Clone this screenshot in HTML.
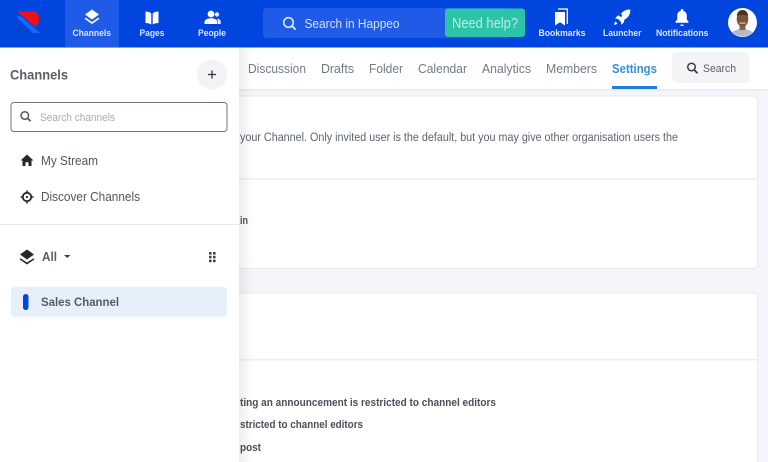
<!DOCTYPE html>
<html lang="en"><head><meta charset="utf-8"><title>Channels</title>
<style>
html,body{margin:0;padding:0;width:768px;height:462px;overflow:hidden;background:#f4f6f9}
svg{display:block}
text{font-family:"Liberation Sans",sans-serif}
</style></head><body>
<svg width="768" height="462" viewBox="0 0 768 462" xmlns="http://www.w3.org/2000/svg">
<defs>
<linearGradient id="sh" x1="0" x2="1" y1="0" y2="0"><stop offset="0" stop-color="#000" stop-opacity=".07"/><stop offset="1" stop-color="#000" stop-opacity="0"/></linearGradient>
<clipPath id="av"><circle cx="742.500" cy="22.500" r="14"/></clipPath>
</defs>
<rect width="768" height="462" fill="#f4f6f9"/>
<!-- tab bar -->
<rect x="0" y="47" width="768" height="42" fill="#fff"/>
<rect x="0" y="89" width="768" height="2" fill="#e9ecf1"/>
<g font-size="12.500" fill="#717a87">
<text x="248" y="73" textLength="58" lengthAdjust="spacingAndGlyphs">Discussion</text>
<text x="321" y="73" textLength="33" lengthAdjust="spacingAndGlyphs">Drafts</text>
<text x="369" y="73" textLength="34" lengthAdjust="spacingAndGlyphs">Folder</text>
<text x="418" y="73" textLength="49" lengthAdjust="spacingAndGlyphs">Calendar</text>
<text x="482" y="73" textLength="49" lengthAdjust="spacingAndGlyphs">Analytics</text>
<text x="546" y="73" textLength="51" lengthAdjust="spacingAndGlyphs">Members</text>
<text x="612" y="73" textLength="45" lengthAdjust="spacingAndGlyphs" font-weight="700" fill="#3a8fdd">Settings</text>
</g>
<rect x="612" y="86" width="45" height="3" fill="#1f7fd6"/>
<rect x="672" y="52" width="77" height="31" rx="4" fill="#f3f4f6"/>
<circle cx="691.500" cy="67" r="3.800" fill="none" stroke="#3b4048" stroke-width="1.500"/>
<path d="M694.300 70l3.200 3.200" stroke="#3b4048" stroke-width="1.800"/>
<text x="703" y="72" font-size="11" fill="#5a616c" textLength="33" lengthAdjust="spacingAndGlyphs">Search</text>
<!-- cards -->
<rect x="200" y="96" width="557.500" height="172.500" rx="4" fill="#fff" stroke="#e6e9ee"/>
<rect x="200" y="178" width="557" height="1.500" fill="#eceef1"/>
<text x="240" y="141" font-size="11.500" fill="#5c6370" textLength="438" lengthAdjust="spacingAndGlyphs">your Channel. Only invited user is the default, but you may give other organisation users the</text>
<text x="240" y="224" font-size="11" font-weight="700" fill="#4a5059" textLength="8" lengthAdjust="spacingAndGlyphs">in</text>
<rect x="200" y="293" width="557.500" height="180" rx="4" fill="#fff" stroke="#e6e9ee"/>
<rect x="200" y="359" width="557" height="1.500" fill="#eceef1"/>
<g font-size="11" font-weight="700" fill="#4a5059">
<text x="240" y="406" textLength="256" lengthAdjust="spacingAndGlyphs">ting an announcement is restricted to channel editors</text>
<text x="240" y="428" textLength="123" lengthAdjust="spacingAndGlyphs">stricted to channel editors</text>
<text x="240" y="451" textLength="21" lengthAdjust="spacingAndGlyphs">post</text>
</g>
<!-- sidebar -->
<rect x="239" y="47" width="14" height="415" fill="url(#sh)"/>
<rect x="0" y="47" width="239" height="415" fill="#fff"/>
<text x="10" y="79.500" font-size="14" font-weight="700" fill="#5a5f67" textLength="58" lengthAdjust="spacingAndGlyphs">Channels</text>
<circle cx="212" cy="74.500" r="15" fill="#f2f3f5"/>
<path d="M212 70.500v8M208 74.500h8" stroke="#33383f" stroke-width="1.300"/>
<rect x="11" y="102.500" width="216" height="29" rx="3" fill="#fff" stroke="#6e7480" stroke-width="1"/>
<circle cx="24.800" cy="115.500" r="3.800" fill="none" stroke="#555b65" stroke-width="1.500"/>
<path d="M27.600 118.300l3 3" stroke="#555b65" stroke-width="1.800"/>
<text x="40" y="121" font-size="10.800" fill="#a4abba" textLength="75" lengthAdjust="spacingAndGlyphs">Search channels</text>
<path d="M27 154.500l6.500 6h-2v5.500h-3v-3.700h-3v3.700h-3v-5.500h-2z" fill="#23272e"/>
<text x="41" y="165" font-size="12.500" fill="#50565f" textLength="57" lengthAdjust="spacingAndGlyphs">My Stream</text>
<circle cx="27" cy="197" r="4.200" fill="none" stroke="#23272e" stroke-width="1.800"/>
<circle cx="27" cy="197" r="1.100" fill="#23272e"/>
<path d="M27 190.500v3M27 200.500v3M20.500 197h3M30.500 197h3" stroke="#23272e" stroke-width="1.600"/>
<text x="41" y="201" font-size="12.500" fill="#50565f" textLength="99" lengthAdjust="spacingAndGlyphs">Discover Channels</text>
<rect x="0" y="224" width="239" height="1" fill="#e3e6ea"/>
<path d="M27 249.500l7 5-7 5-7-5z" fill="#23272e"/>
<path d="M20.500 258.200l6.500 4.300 6.500-4.300 .8 1.300-7.300 5-7.300-5z" fill="#23272e"/>
<text x="42" y="261" font-size="12.500" font-weight="700" fill="#5a5f67" textLength="15" lengthAdjust="spacingAndGlyphs">All</text>
<path d="M64 255h6.500l-3.250 3z" fill="#3a3f47"/>
<g fill="#3a3f47"><rect x="209" y="252" width="2.600" height="2.600" rx=".6"/><rect x="213" y="252" width="2.600" height="2.600" rx=".6"/><rect x="209" y="255.800" width="2.600" height="2.600" rx=".6"/><rect x="213" y="255.800" width="2.600" height="2.600" rx=".6"/><rect x="209" y="259.600" width="2.600" height="2.600" rx=".6"/><rect x="213" y="259.600" width="2.600" height="2.600" rx=".6"/></g>
<rect x="11" y="287" width="216" height="30" rx="4" fill="#e5f0fa"/>
<rect x="23" y="294" width="5.500" height="16" rx="2.750" fill="#0047e1"/>
<text x="41" y="306" font-size="12" font-weight="700" fill="#555b64" textLength="78" lengthAdjust="spacingAndGlyphs">Sales Channel</text>
<!-- header -->
<rect x="0" y="0" width="768" height="47" fill="#0046de"/>
<rect x="0" y="47" width="768" height="1" fill="#7fa2ee"/>
<rect x="65" y="0" width="54" height="47" fill="#1f5be6"/>
<!-- logo -->
<path d="M17.500 24l10 9.500H17.500z" fill="#0f3fb0" opacity=".75"/>
<path d="M17 17.500l3-2 20 17.500h-7z" fill="#1a66ff"/>
<path d="M17 11.500h15c4.500 0 7 3 7 7 0 3.500-1.200 6.500-3.500 8.500z" fill="#f0101c"/>
<!-- nav icons -->
<g fill="#fff">
<path d="M92 9.500l7 5-7 5-7-5z"/>
<path d="M85.500 17.500l6.500 4.500 6.500-4.500 .9 1.300-7.400 5.200-7.400-5.200z"/>
<path d="M145.500 11.500c2.300 0 4.600.8 5.800 2v11c-1.400-1-3.600-1.500-5.800-1.500zM158.500 11.500c-2.300 0-4.600.8-5.800 2v11c1.400-1 3.600-1.500 5.800-1.500z"/>
<circle cx="211" cy="14" r="3.400"/><path d="M204.500 24v-2c0-2.500 3.500-3.800 6.500-3.800s6.500 1.300 6.500 3.800v2z"/>
<circle cx="217" cy="14.500" r="2.200" opacity=".9"/><path d="M218 24v-2.500c0-1.300-.5-2-1-2.800 1.800 0 3.700.9 3.700 2.800V24z" opacity=".9"/>
<path d="M555 12h10v13.500l-5-3.200-5 3.200z"/>
<path d="M558 9h9.300v15" fill="none" stroke="#fff" stroke-width="1.300"/>
<path d="M628.500 9.500c-3.500 .3-6.500 2.300-8.500 6l-2.500.3-2.500 2.700 3 .5 2.800 2.800.5 3 2.700-2.500.3-2.500c3.700-2 5.700-5 6-8.500 0-1 0-1.800-.8-1.800z"/>
<path d="M615.500 21.500c-1 1-1.300 2.500-1.300 3.300 1 0 2.300-.3 3.300-1.300z"/>
<path d="M682 9c.9 0 1.300.6 1.300 1.300v.6c2.200.6 3.500 2.400 3.500 4.600v4l1.700 2.200v1h-13v-1l1.700-2.200v-4c0-2.200 1.300-4 3.500-4.600v-.6c0-.7.4-1.300 1.300-1.300zM680.200 24.600h3.600c0 1-.8 1.400-1.800 1.400s-1.800-.4-1.800-1.400z"/>
</g>
<circle cx="620.800" cy="15.500" r="1.300" fill="#0046de"/>
<g font-size="9" font-weight="700" fill="#dce6fb">
<text x="72.500" y="36" textLength="38.500" lengthAdjust="spacingAndGlyphs">Channels</text>
<text x="139.500" y="36" textLength="25" lengthAdjust="spacingAndGlyphs">Pages</text>
<text x="198" y="36" textLength="28" lengthAdjust="spacingAndGlyphs">People</text>
<text x="538.500" y="36" textLength="47" lengthAdjust="spacingAndGlyphs">Bookmarks</text>
<text x="603" y="36" textLength="38.500" lengthAdjust="spacingAndGlyphs">Launcher</text>
<text x="656" y="36" textLength="52.500" lengthAdjust="spacingAndGlyphs">Notifications</text>
</g>
<!-- search -->
<rect x="263" y="8" width="247" height="30" rx="4" fill="#1f5be6"/>
<circle cx="288.500" cy="22.500" r="4.800" fill="none" stroke="#dfe8fb" stroke-width="1.600"/>
<path d="M292 26l3.500 3.500" stroke="#dfe8fb" stroke-width="1.900"/>
<text x="304.500" y="28" font-size="13" fill="#d6e2fa" textLength="95" lengthAdjust="spacingAndGlyphs">Search in Happeo</text>
<rect x="445" y="8.500" width="80" height="28.500" rx="3" fill="#2cc4a8"/>
<text x="452" y="28" font-size="14.500" fill="#b9efdd" textLength="66" lengthAdjust="spacingAndGlyphs">Need help?</text>
<!-- avatar -->
<circle cx="742.500" cy="22.500" r="14.500" fill="#fff"/>
<g clip-path="url(#av)">
<path d="M730 37c1-5.500 5-7.500 12.500-8 7 .5 11 2.500 13 8z" fill="#b4bac3"/>
<rect x="739.500" y="24" width="6" height="6" fill="#8a6248"/>
<ellipse cx="742.500" cy="19" rx="5.800" ry="7.800" fill="#7d543a"/>
<path d="M736.800 16c.5-4.500 3-6 5.700-6s5.200 1.500 5.700 6c-3-1.600-8.400-1.600-11.400 0z" fill="#4a3023"/>
<rect x="739.500" y="22.500" width="6" height="1.200" fill="#d9c9bb"/>
</g>
</svg>
</body></html>
